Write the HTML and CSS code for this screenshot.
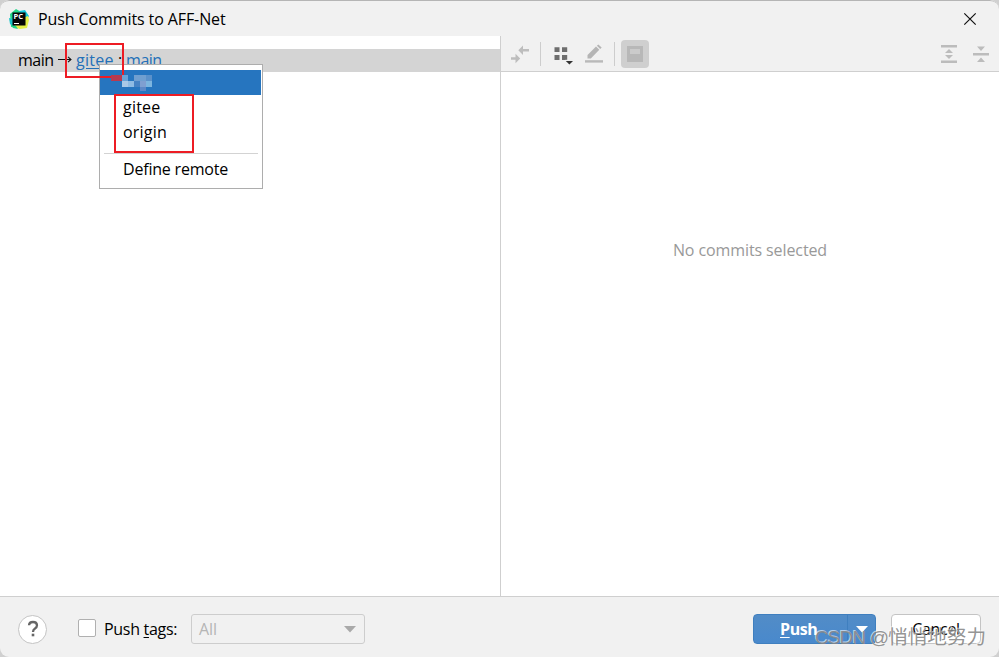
FILE: index.html
```html
<!DOCTYPE html>
<html lang="en">
<head>
  <meta charset="UTF-8">
  <meta name="viewport" content="width=device-width, initial-scale=1.0">
  <title>Push Commits to AFF-Net</title>
  <link rel="stylesheet" href="styles.css">
</head>
<body>
  <div class="dialog">
    <header class="titlebar">
      <svg class="logo" width="20" height="20" viewBox="0 0 20 20">
        <path d="M1 5 7 0l5 3-3 14-7 1z" fill="#21d789"/>
        <path d="M10 2 16 1l4 6-3 5z" fill="#14c5d8"/>
        <path d="M0 9l4 1 2 8-5-3z" fill="#18c4c9"/>
        <path d="M14 9l5-2 1 4-2 8-7 1-7-2z" fill="#e4ee45"/>
        <path d="M2 16l5 1 2 3-5-1z" fill="#21d789"/>
        <rect x="3.5" y="3.5" width="13" height="13" fill="#050505"/>
        <rect x="5" y="14" width="5" height="1" fill="#fff"/>
        <text x="4.6" y="10.4" class="logo-text">PC</text>
      </svg>
      <h1>Push Commits to AFF-Net</h1>
      <svg class="close" width="14" height="14" viewBox="0 0 14 14">
        <path d="M1.3 1.3 12.7 12.7M12.7 1.3 1.3 12.7" fill="none" stroke="#111" stroke-width="1.2"/>
      </svg>
    </header>

    <main class="content">
      <section class="repos">
        <div class="repo-row">
          <span class="branch">main</span>
          <svg class="arrow" width="14" height="9" viewBox="0 0 14 9">
            <path d="M0 4.5h13M10 1.8l3 2.7-3 2.7" fill="none" stroke="#111" stroke-width="1.1"/>
          </svg>
          <a class="remote">gitee</a>
          <span class="colon">:</span>
          <a class="target">main</a>
        </div>

        <!-- Remote popup -->
        <div class="popup">
          <div class="popup-item selected">
            <svg class="mosaic" width="42" height="18" viewBox="0 0 42 18" shape-rendering="crispEdges">
              <rect width="11" height="6" fill="#b83a50"/>
              <rect x="11" width="6" height="6" fill="#67a3d8"/>
              <rect x="23" width="12" height="6" fill="#709fd0"/>
              <rect x="35" width="6" height="6" fill="#5b91ca"/>
              <rect x="11" y="6" width="6" height="6" fill="#a9c8e7"/>
              <rect x="17" y="6" width="6" height="6" fill="#8fbbe3"/>
              <rect x="23" y="6" width="6" height="6" fill="#4682c3"/>
              <rect x="29" y="6" width="6" height="6" fill="#7f9fd1"/>
              <rect x="35" y="6" width="6" height="6" fill="#7cb5df"/>
              <rect x="29" y="12" width="6" height="4" fill="#5d88c7"/>
            </svg>
          </div>
          <div class="popup-item name">gitee</div>
          <div class="popup-item name">origin</div>
          <div class="popup-separator"></div>
          <div class="popup-item define">Define remote</div>
        </div>
        <div class="marker marker-link"></div>
        <div class="marker marker-remotes"></div>
      </section>

      <section class="commits">
        <div class="toolbar">
          <svg class="icon-diff" width="20" height="20" viewBox="0 0 20 20">
            <path d="M8.300 6.200 13 1.500v3.500h6v2.500h-6V11zM10.200 14.500 5.500 9.800v3.500H1v2.500h4.500v3.500z" fill="#bdbdbd"/>
          </svg>
          <span class="divider"></span>
          <svg class="icon-group" width="20" height="20" viewBox="0 0 20 20">
            <path d="M1.500 2.300h5v4.700h-5zM9 2.300h5.200v4.700H9zM1.500 10h5v5h-5zM9 10h5.200v5H9z" fill="#6e6e6e"/>
            <path d="M12.300 15.300h8l-4 4z" fill="#f1f1f1" stroke="#f1f1f1" stroke-width="1"/>
            <path d="M12.800 16h7.200l-3.600 3.500z" fill="#333"/>
          </svg>
          <svg class="icon-edit" width="20" height="20" viewBox="0 0 20 20">
            <path d="M3.500 14.500V11l8.500-8.500 3.300 3.300-8.500 8.700zM12.900 1.800 14.300.600 17.700 3.600l-1.500 1.400z" fill="#b5b5b5"/>
            <path d="M1 16.200h18v2.400H1z" fill="#b9b9b9"/>
          </svg>
          <span class="divider"></span>
          <span class="toggle">
            <svg width="16" height="16" viewBox="0 0 16 16">
              <path d="M0 0h16v16H0z" fill="#b8b8b8"/>
              <path d="M3 3h10v5H3z" fill="#cbcbcb"/>
            </svg>
          </span>
          <svg class="icon-expand" width="16" height="18" viewBox="0 0 16 18">
            <path d="M0 0h16v2.500H0zM0 15.500h16V18H0zM8 4l4 4H4zM8 14l4-4H4z" fill="#bcbcbc"/>
          </svg>
          <svg class="icon-collapse" width="16" height="18" viewBox="0 0 16 18">
            <path d="M0 8h16v2.500H0zM8 6l4-4.500H4zM8 12.500l4 4.500H4z" fill="#bcbcbc"/>
          </svg>
        </div>
        <div class="empty">No commits selected</div>
      </section>
    </main>

    <footer class="footer">
      <div class="help">
        <svg width="14" height="18" viewBox="0 0 14 18">
          <path d="M3 5.300Q3.200 2 7 2t4 3.300Q11 7.200 9 8.500 7 9.700 7 12" fill="none" stroke="#666" stroke-width="2.300"/>
          <rect x="5.700" y="13.700" width="2.600" height="2.600" fill="#666"/>
        </svg>
      </div>
      <span class="checkbox"></span>
      <label class="tags-label">Push <u>t</u>ags:</label>
      <div class="select">
        <span>All</span>
        <svg width="12" height="7" viewBox="0 0 12 7"><path d="M0 0h12L6 6.500z" fill="#a9a9a9"/></svg>
      </div>
      <div class="push">
        <span class="push-text"><u>P</u>ush</span>
        <span class="push-arrow">
          <svg width="12" height="7" viewBox="0 0 12 7"><path d="M0 0h12L6 6.500z" fill="#fff"/></svg>
        </span>
      </div>
      <div class="cancel">Cancel</div>
    </footer>
    <div class="watermark"><span class="site">CSDN @</span>悄悄地努力</div>
  </div>
</body>
</html>
```
FILE: styles.css
```css
* {
  box-sizing: border-box;
}

body {
  margin: 0;
  background: #d0d0d0;
  color: #000;
  font-family: "Open Sans", "Noto Sans", sans-serif;
  font-size: 16px;
  line-height: 20px;
  letter-spacing: -0.1px;
}

.dialog {
  position: relative;
  display: flex;
  flex-direction: column;
  height: 657px;
  width: 999px;
  overflow: hidden;
  background: #f1f1f1;
  border-radius: 9px;
}

.dialog::after {
  content: "";
  position: absolute;
  inset: 0;
  border-top: 1px solid #b5b5b5;
  border-radius: 9px;
}

svg {
  display: block;
  flex: none;
}

/* Title bar */
.titlebar {
  display: flex;
  align-items: center;
  height: 36px;
  padding: 2px 22px 0 9px;
}

.logo-text {
  fill: #fff;
  font: bold 7.5px "Open Sans", sans-serif;
}

h1 {
  margin: 0 0 0 9px;
  font-size: 16px;
  font-weight: 400;
}

.close {
  margin-left: auto;
}

.content {
  display: flex;
  height: 560px;
  background: #fff;
}

/* Left side */
.repos {
  position: relative;
  width: 501px;
  padding-top: 13px;
  border-right: 1px solid #cfcfcf;
}

.repo-row {
  display: flex;
  align-items: center;
  height: 23px;
  padding: 0 0 2px 18px;
  background: #d4d4d4;
}

.branch,
.target {
  width: 35px;
  letter-spacing: -0.5px;
}

.arrow {
  margin: 0 4px 0 5px;
}

.remote,
.target {
  color: #2470b8;
  text-decoration: underline;
  text-underline-offset: 2px;
}

.remote {
  width: 38px;
  letter-spacing: 0.3px;
}

.colon {
  margin: 0 4px;
}

.popup {
  position: absolute;
  left: 99px;
  top: 28px;
  width: 164px;
  height: 125px;
  padding-top: 5px;
  background: #fff;
  border: 1px solid #adadad;
}

.popup-item {
  height: 25px;
  padding-left: 23px;
  line-height: 25px;
}

.name {
  letter-spacing: 0.2px;
}

.define {
  letter-spacing: -0.2px;
}

.selected {
  margin-right: 1px;
  padding: 5px 0 0 11px;
  background: #2675bf;
}

.mosaic {
  position: relative;
  z-index: 1;
}

.popup-separator {
  height: 1px;
  margin: 8px 4px 3px;
  background: #d3d3d3;
}

.marker {
  position: absolute;
  border: 2px solid #ed1c24;
}

.marker-link {
  left: 65px;
  top: 7px;
  width: 59px;
  height: 35px;
}

.marker-remotes {
  left: 114px;
  top: 58px;
  width: 80px;
  height: 59px;
}

/* Right side */
.commits {
  flex: 1;
}

.toolbar {
  display: flex;
  align-items: center;
  height: 36px;
  padding: 0 10px 0 9px;
  background: #f1f1f1;
  border-bottom: 1px solid #cfcfcf;
}

.divider {
  width: 1px;
  height: 24px;
  background: #cdcdcd;
}

.icon-diff {
  margin-right: 10px;
}

.icon-group {
  margin: 2px 11px 0 12px;
}

.icon-edit {
  margin-right: 10px;
}

.toggle {
  display: flex;
  align-items: center;
  justify-content: center;
  width: 28px;
  height: 28px;
  margin-left: 6px;
  background: #cfcfcf;
  border-radius: 4px;
}

.icon-expand {
  margin-left: auto;
}

.icon-collapse {
  margin-left: 16px;
}

.empty {
  padding-top: 168px;
  color: #999;
  text-align: center;
}

/* Footer */
.footer {
  display: flex;
  align-items: center;
  height: 61px;
  padding: 4px 18px 0;
  border-top: 1px solid #cfcfcf;
}

.help {
  display: flex;
  align-items: center;
  justify-content: center;
  width: 29px;
  height: 29px;
  background: #fff;
  border: 1px solid #c4c4c4;
  border-radius: 50%;
}

.checkbox {
  width: 18px;
  height: 18px;
  margin: 0 0 2px 31px;
  background: #fff;
  border: 1px solid #b0b0b0;
  border-radius: 2px;
}

.tags-label {
  width: 87px;
  margin-left: 8px;
  letter-spacing: -0.3px;
}

u {
  text-underline-offset: 2px;
}

.select {
  display: flex;
  align-items: center;
  justify-content: space-between;
  width: 174px;
  height: 30px;
  padding: 0 8px 0 7px;
  color: #b5b5b5;
  border: 1px solid #cdcdcd;
  border-radius: 3px;
}

.push {
  display: flex;
  width: 123px;
  height: 30px;
  margin-left: auto;
  color: #fff;
  font-weight: 700;
  line-height: 28px;
  letter-spacing: -0.4px;
  background: linear-gradient(#528cc7, #4989cc);
  border: 1px solid #3f7fbf;
  border-radius: 4px;
}

.push-text {
  width: 93px;
  padding-left: 26px;
}

.push-arrow {
  display: flex;
  flex: 1;
  align-items: center;
  justify-content: center;
  border-left: 1px solid #3f7fbf;
}

.cancel {
  width: 90px;
  height: 30px;
  margin-left: 15px;
  line-height: 28px;
  text-align: center;
  letter-spacing: -0.3px;
  background: #fff;
  border: 1px solid #c4c4c4;
  border-radius: 4px;
}

.watermark {
  position: absolute;
  right: 13px;
  bottom: 6px;
  color: rgba(135, 135, 135, 0.9);
  font: 19.6px/26px "Liberation Sans", "Noto Sans CJK SC", sans-serif;
  letter-spacing: 0;
  text-shadow: -1px -1px 0 rgba(255, 255, 255, 0.6);
  white-space: nowrap;
}

.site {
  font-size: 19px;
  letter-spacing: -0.9px;
}
```
